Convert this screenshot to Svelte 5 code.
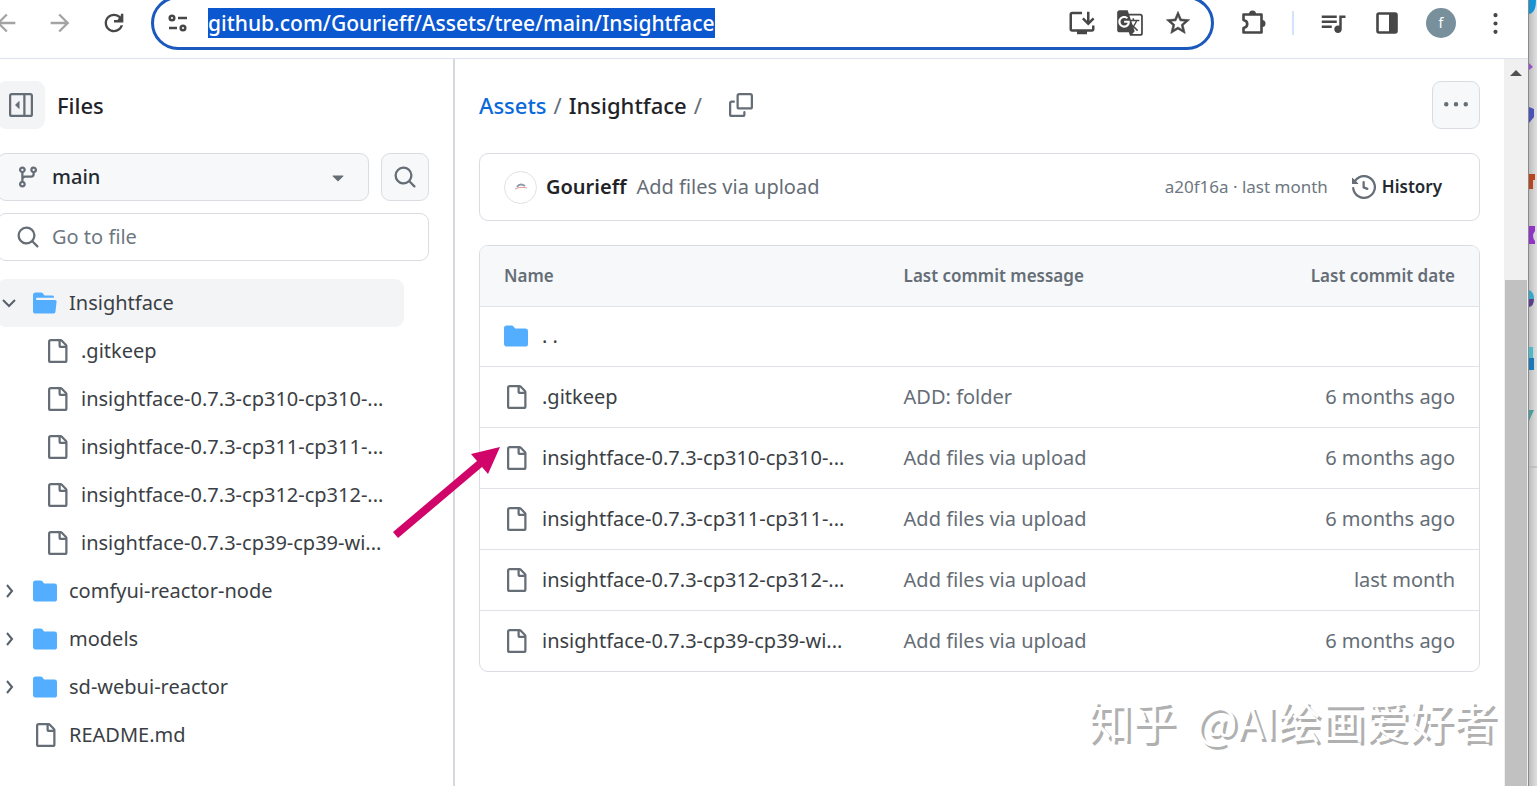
<script lang="ts">
	type Entry = { name: string; message?: string; date?: string };
	type Node = { name: string; kind: 'open' | 'folder' | 'file'; nested?: boolean };

	const tree: Node[] = [
		{ name: 'Insightface', kind: 'open' },
		{ name: '.gitkeep', kind: 'file', nested: true },
		{ name: 'insightface-0.7.3-cp310-cp310-...', kind: 'file', nested: true },
		{ name: 'insightface-0.7.3-cp311-cp311-...', kind: 'file', nested: true },
		{ name: 'insightface-0.7.3-cp312-cp312-...', kind: 'file', nested: true },
		{ name: 'insightface-0.7.3-cp39-cp39-wi...', kind: 'file', nested: true },
		{ name: 'comfyui-reactor-node', kind: 'folder' },
		{ name: 'models', kind: 'folder' },
		{ name: 'sd-webui-reactor', kind: 'folder' },
		{ name: 'README.md', kind: 'file' }
	];

	const entries: Entry[] = [
		{ name: '.gitkeep', message: 'ADD: folder', date: '6 months ago' },
		{ name: 'insightface-0.7.3-cp310-cp310-...', message: 'Add files via upload', date: '6 months ago' },
		{ name: 'insightface-0.7.3-cp311-cp311-...', message: 'Add files via upload', date: '6 months ago' },
		{ name: 'insightface-0.7.3-cp312-cp312-...', message: 'Add files via upload', date: 'last month' },
		{ name: 'insightface-0.7.3-cp39-cp39-wi...', message: 'Add files via upload', date: '6 months ago' }
	];

	let url = $state('github.com/Gourieff/Assets/tree/main/Insightface');
	let query = $state('');
	let branch = $state('main');

	// 16px grid
	const oct = {
		file: 'M2 1.75C2 .784 2.784 0 3.75 0h6.586c.464 0 .909.184 1.237.513l2.914 2.914c.329.328.513.773.513 1.237v9.586A1.75 1.75 0 0 1 13.25 16h-9.5A1.75 1.75 0 0 1 2 14.25Zm1.75-.25a.25.25 0 0 0-.25.25v12.5c0 .138.112.25.25.25h9.5a.25.25 0 0 0 .25-.25V6h-2.75A1.75 1.75 0 0 1 9 4.25V1.5Zm6.75.062V4.25c0 .138.112.25.25.25h2.688l-.011-.013-2.914-2.914-.013-.011Z',
		folder: 'M1.75 1A1.75 1.75 0 0 0 0 2.75v10.5C0 14.216.784 15 1.75 15h12.5A1.75 1.75 0 0 0 16 13.25v-8.5A1.75 1.75 0 0 0 14.25 3H7.5a.25.25 0 0 1-.2-.1l-.9-1.2C6.07 1.26 5.55 1 5 1H1.75Z',
		open: 'M.513 1.513A1.75 1.75 0 0 1 1.75 1h3.5c.55 0 1.07.26 1.4.7l.9 1.2a.25.25 0 0 0 .2.1H13a1 1 0 0 1 1 1v.5H2.75a.75.75 0 0 0 0 1.5h11.978a1 1 0 0 1 .994 1.117L15 13.25A1.75 1.75 0 0 1 13.25 15H1.75A1.75 1.75 0 0 1 0 13.25V2.75c0-.464.184-.91.513-1.237Z',
		search: 'M10.68 11.74a6 6 0 0 1-7.922-8.982 6 6 0 0 1 8.982 7.922l3.04 3.04a.749.749 0 0 1-.326 1.275.749.749 0 0 1-.734-.215ZM11.5 7a4.499 4.499 0 1 0-8.997 0A4.499 4.499 0 0 0 11.5 7Z',
		branch: 'M9.5 3.25a2.25 2.25 0 1 1 3 2.122V6A2.5 2.5 0 0 1 10 8.5H6a1 1 0 0 0-1 1v1.128a2.251 2.251 0 1 1-1.5 0V5.372a2.25 2.25 0 1 1 1.5 0v1.836A2.493 2.493 0 0 1 6 7h4a1 1 0 0 0 1-1v-.628A2.25 2.25 0 0 1 9.5 3.25Zm-6 0a.75.75 0 1 0 1.5 0 .75.75 0 0 0-1.5 0Zm8.25-.75a.75.75 0 1 0 0 1.5.75.75 0 0 0 0-1.5ZM4.25 12a.75.75 0 1 0 0 1.5.75.75 0 0 0 0-1.5Z',
		copy: 'M0 6.75C0 5.784.784 5 1.75 5h1.5a.75.75 0 0 1 0 1.5h-1.5a.25.25 0 0 0-.25.25v7.5c0 .138.112.25.25.25h7.5a.25.25 0 0 0 .25-.25v-1.5a.75.75 0 0 1 1.5 0v1.5A1.75 1.75 0 0 1 9.25 16h-7.5A1.75 1.75 0 0 1 0 14.25ZM5 1.75C5 .784 5.784 0 6.75 0h7.5C15.216 0 16 .784 16 1.75v7.5A1.75 1.75 0 0 1 14.25 11h-7.5A1.75 1.75 0 0 1 5 9.25Zm1.75-.25a.25.25 0 0 0-.25.25v7.5c0 .138.112.25.25.25h7.5a.25.25 0 0 0 .25-.25v-7.5a.25.25 0 0 0-.25-.25Z',
		history: 'm.427 1.927 1.215 1.215a8.002 8.002 0 1 1-1.6 5.685.75.75 0 1 1 1.493-.154 6.5 6.5 0 1 0 1.18-4.458l1.358 1.358A.25.25 0 0 1 3.896 6H.25A.25.25 0 0 1 0 5.75V2.104a.25.25 0 0 1 .427-.177ZM7.75 4a.75.75 0 0 1 .75.75v2.992l2.028.812a.75.75 0 0 1-.557 1.392l-2.5-1A.751.751 0 0 1 7 8.25v-3.5A.75.75 0 0 1 7.75 4Z',
		kebab: 'M8 9a1.5 1.5 0 1 0 0-3 1.5 1.5 0 0 0 0 3ZM1.5 9a1.5 1.5 0 1 0 0-3 1.5 1.5 0 0 0 0 3Zm13 0a1.5 1.5 0 1 0 0-3 1.5 1.5 0 0 0 0 3Z',
		sidebar: 'm4.177 7.823 2.396-2.396A.25.25 0 0 1 7 5.604v4.792a.25.25 0 0 1-.427.177L4.177 8.177a.25.25 0 0 1 0-.354ZM0 1.75C0 .784.784 0 1.75 0h12.5C15.216 0 16 .784 16 1.75v12.5A1.75 1.75 0 0 1 14.25 16H1.75A1.75 1.75 0 0 1 0 14.25Zm1.75-.25a.25.25 0 0 0-.25.25v12.5c0 .138.112.25.25.25H9.5v-13Zm12.5 13a.25.25 0 0 0 .25-.25V1.75a.25.25 0 0 0-.25-.25H11v13Z',
		caret: 'm4.427 7.427 3.396 3.396a.25.25 0 0 0 .354 0l3.396-3.396A.25.25 0 0 0 11.396 7H4.604a.25.25 0 0 0-.177.427Z'
	};

	// 24px grid
	const mat = {
		back: 'M20 11H7.83l5.59-5.59L12 4l-8 8 8 8 1.41-1.41L7.83 13H20v-2z',
		forward: 'M12 4l-1.41 1.41L16.17 11H4v2h12.17l-5.58 5.59L12 20l8-8z',
		reload: 'M17.65 6.35C16.2 4.9 14.21 4 12 4c-4.42 0-7.99 3.58-7.99 8s3.57 8 7.99 8c3.73 0 6.84-2.55 7.73-6h-2.08c-.82 2.33-3.04 4-5.65 4-3.31 0-6-2.69-6-6s2.69-6 6-6c1.66 0 3.14.69 4.22 1.78L15 9.5h-3v2h8V4h-2z',
		install: 'M20 17H4V5h8V3H4c-1.1 0-2 .9-2 2v12c0 1.1.9 2 2 2h4v2h8v-2h4c1.1 0 2-.9 2-2v-3h-2v3zM17 14l5-5-1.41-1.41L18 10.17V3h-2v7.17l-2.59-2.58L12 9z',
		translate: 'M21 4H11l-1-3H3c-1.1 0-2 .9-2 2v15c0 1.1.9 2 2 2h8l1 3h9c1.1 0 2-.9 2-2V6c0-1.1-.9-2-2-2zM7 16c-2.76 0-5-2.24-5-5s2.24-5 5-5c1.35 0 2.48.5 3.35 1.3L9.03 8.57c-.38-.36-1.04-.78-2.03-.78-1.74 0-3.15 1.44-3.15 3.21S5.26 14.21 7 14.21c2.01 0 2.84-1.44 2.92-2.41H7v-1.71h4.68c.07.31.12.61.12 1.02C11.8 13.97 9.89 16 7 16zm6.17-5.42h3.7c-.43 1.25-1.11 2.43-2.05 3.47-.31-.35-.6-.72-.86-1.1l-.79-2.37zm8.33 9.92c0 .55-.45 1-1 1H14l2-2.5-1.04-3.1 3.1 3.1.92-.92-3.3-3.25.02-.02c1.13-1.25 1.93-2.69 2.4-4.22H20v-1.3h-4.53V8h-1.29v1.29h-1.44L11.46 5.5h9.04c.55 0 1 .45 1 1v14z',
		star: 'M22 9.24l-7.19-.62L12 2 9.19 8.63 2 9.24l5.46 4.73L5.82 21 12 17.27 18.18 21l-1.63-7.03L22 9.24zM12 15.4l-3.76 2.27 1-4.28-3.32-2.88 4.38-.38L12 6.1l1.71 4.04 4.38.38-3.32 2.88 1 4.28L12 15.4z',
		music: 'M15 6H3v2h12V6zm0 4H3v2h12v-2zM3 16h8v-2H3v2zM17 6v8.18c-.31-.11-.65-.18-1-.18-1.66 0-3 1.34-3 3s1.34 3 3 3 3-1.34 3-3V8h3V6h-5z',
		more: 'M12 6a2 2 0 1 0 0-4 2 2 0 0 0 0 4zm0 8a2 2 0 1 0 0-4 2 2 0 0 0 0 4zm0 8a2 2 0 1 0 0-4 2 2 0 0 0 0 4z'
	};
</script>

{#snippet icon(d: string, grid = 16, size = 24)}
	<svg width={size} height={size} viewBox="0 0 {grid} {grid}" fill="currentColor" aria-hidden="true">
		<path {d} />
	</svg>
{/snippet}

<div class="screen">
	<div class="window">
		<header class="toolbar">
			<nav class="nav" aria-label="Browser">
				<button class="tool dim" aria-label="Back">{@render icon(mat.back, 24, 28)}</button>
				<button class="tool dim" aria-label="Forward">{@render icon(mat.forward, 24, 28)}</button>
				<button class="tool" aria-label="Reload">{@render icon(mat.reload, 24, 28)}</button>
			</nav>
			<div class="omnibox">
				<button class="chip" aria-label="Site information">
					<svg width="20" height="18" viewBox="0 0 20 18" fill="none" stroke="currentColor" stroke-width="2.5" aria-hidden="true">
						<circle cx="4" cy="4" r="2.3" />
						<path d="M10 4h9M1 14h8" />
						<circle cx="15" cy="14" r="2.3" />
					</svg>
				</button>
				<input class="url" type="text" aria-label="Address" size="48" bind:value={url} />
				<div class="chips">
					<button class="chip" aria-label="Install app">{@render icon(mat.install, 24, 30)}</button>
					<button class="chip" aria-label="Translate page">{@render icon(mat.translate, 24, 28)}</button>
					<button class="chip" aria-label="Bookmark">
						<svg width="28" height="28" viewBox="0 0 24 24" fill="currentColor" stroke="currentColor" stroke-width="0.5" aria-hidden="true">
							<path d={mat.star} />
						</svg>
					</button>
				</div>
			</div>
			<button class="tool" aria-label="Extensions">
				<svg width="28" height="28" viewBox="0 0 28 28" fill="none" stroke="currentColor" stroke-width="2.6" stroke-linejoin="round" aria-hidden="true">
					<path d="M4.500 5.500h18v18h-18v-4.500c5-1 5-7 0-8z" />
					<path d="M10 5a3.500 3.500 0 0 1 7 0zM23 11a3.500 3.500 0 0 1 0 7z" fill="currentColor" stroke="none" />
				</svg>
			</button>
			<span class="divider"></span>
			<button class="tool" aria-label="Media">{@render icon(mat.music, 24, 30)}</button>
			<button class="tool" aria-label="Side panel">
				<svg width="22" height="22" viewBox="0 0 22 22" aria-hidden="true">
					<rect x="1.500" y="1.500" width="19" height="19" rx="1.500" fill="none" stroke="currentColor" stroke-width="2.6" />
					<path d="M13 1h8v20h-8z" fill="currentColor" />
				</svg>
			</button>
			<button class="tool" aria-label="Profile"><span class="profile">f</span></button>
			<button class="tool" aria-label="Menu">{@render icon(mat.more, 24, 25)}</button>
		</header>

		<div class="page">
			<aside class="sidebar">
				<div class="files-head">
					<button class="square quiet" aria-label="Collapse file tree">{@render icon(oct.sidebar)}</button>
					<h2>Files</h2>
				</div>
				<div class="branch-row">
					<label class="branch">
						{@render icon(oct.branch)}
						<select aria-label="Branch" bind:value={branch}>
							<option>main</option>
						</select>
						{@render icon(oct.caret)}
					</label>
					<button class="square" aria-label="Search this repository">{@render icon(oct.search)}</button>
				</div>
				<label class="filter">
					{@render icon(oct.search)}
					<input type="text" aria-label="Go to file" placeholder="Go to file" bind:value={query} />
				</label>
				<ul class="tree">
					{#each tree as node}
						<li class:active={node.kind === 'open'} class:nested={node.nested}>
							<span class="chevron">
								{#if node.kind !== 'file'}
									<svg width="14" height="14" viewBox="0 0 14 14" fill="none" stroke="currentColor" stroke-width="2" aria-hidden="true">
										<path d={node.kind === 'open' ? 'M1 4l6 6 6-6' : 'M5 1l5 6-5 6'} />
									</svg>
								{/if}
							</span>
							<span class="glyph" class:blue={node.kind !== 'file'}>{@render icon(oct[node.kind])}</span>
							<a href="#{node.name}">{node.name}</a>
						</li>
					{/each}
				</ul>
			</aside>

			<main class="content">
				<div class="crumbs">
					<a href="#assets">Assets</a>
					<span class="slash">/</span>
					<h1>Insightface</h1>
					<span class="slash">/</span>
					<button class="copy" aria-label="Copy path">{@render icon(oct.copy)}</button>
					<button class="square more" aria-label="More options">{@render icon(oct.kebab)}</button>
				</div>

				<section class="commit">
					<span class="avatar">
						<svg width="14" height="8" viewBox="0 0 14 8" fill="none" aria-hidden="true">
							<path d="M3 4c2-3 5-3 8-1" stroke="#8a98a8" stroke-width="2" />
							<path d="M1 6c4-2 8-2 12-1" stroke="#e89a98" />
						</svg>
					</span>
					<a class="author" href="#gourieff">Gourieff</a>
					<a class="message" href="#commit">Add files via upload</a>
					<span class="sha">a20f16a · last month</span>
					<a class="history" href="#history">{@render icon(oct.history)}History</a>
				</section>

				<div class="listing">
					<table>
						<thead>
							<tr>
								<th class="col-name">Name</th>
								<th>Last commit message</th>
								<th class="date">Last commit date</th>
							</tr>
						</thead>
						<tbody>
							<tr class="parent">
								<td colspan="3">
									<a class="entry" href="#parent"><span class="glyph blue">{@render icon(oct.folder)}</span>. .</a>
								</td>
							</tr>
							{#each entries as entry}
								<tr>
									<td>
										<a class="entry" href="#{entry.name}"><span class="glyph">{@render icon(oct.file)}</span>{entry.name}</a>
									</td>
									<td>{entry.message}</td>
									<td class="date">{entry.date}</td>
								</tr>
							{/each}
						</tbody>
					</table>
				</div>
			</main>

			<div class="scrollbar">
				<svg width="12" height="6" viewBox="0 0 12 6" aria-hidden="true"><path d="M0 6l6-6 6 6z" fill="#505050" /></svg>
				<div class="thumb"></div>
			</div>
		</div>
	</div>

	<!-- sliver of the desktop dock behind the window -->
	<div class="dock">
		<svg width="8" height="480" viewBox="0 0 8 480" aria-hidden="true">
			<path d="M0 0h7c0 8-2 13-7 14z" fill="#1492d6" />
			<path d="M0 63l4 4-4 3z" fill="#9a4fd0" />
			<path d="M0 107l5 2v8l-5 6z" fill="#4a52b8" />
			<path d="M0 174h6v6H4v9H0z" fill="#b8451f" />
			<path d="M0 226h6v5q-4 5 0 10v3H0z" fill="#9034c8" />
			<path d="M0 290q5 2 5 9H0z" fill="#35a8c8" />
			<path d="M0 299h5q0 7-5 8z" fill="#5b3f8c" />
			<path d="M0 347h4v11H0z" fill="#4fb9c9" />
			<path d="M0 358h5v12H0z" fill="#1b78b8" />
			<path d="M0 410h5l-5 11z" fill="#4d9a9f" />
			<path d="M0 467h8" stroke="#b0b0b0" />
		</svg>
	</div>

	<svg class="pointer" width="108" height="100" viewBox="0 0 108 100" aria-hidden="true">
		<path d="M110 7L98 34l-6-7L8 98l-5-6 84-71-6-7z" fill="#d1046a" />
	</svg>
	<div class="watermark"><span>知乎</span> <span>@AI绘画爱好者</span></div>
</div>

<style>
	:global(body) {
		margin: 0;
	}

	.screen {
		position: relative;
		display: flex;
		min-height: 100vh;
		overflow: hidden;
		font-family: 'Noto Sans', 'Open Sans', 'Noto Sans CJK SC', sans-serif;
		font-size: 20px;
		line-height: 30px;
		color: #3b3f45;
		background: #fff;
	}
	.screen * {
		box-sizing: border-box;
	}

	button,
	input,
	select {
		margin: 0;
		padding: 0;
		border: 0;
		background: none;
		font: inherit;
		color: inherit;
		outline: none;
	}
	button {
		display: flex;
		align-items: center;
		justify-content: center;
		flex: none;
	}
	svg {
		display: block;
		flex: none;
	}
	a {
		color: inherit;
		text-decoration: none;
	}

	.window {
		flex: 1;
		min-width: 0;
		display: flex;
		flex-direction: column;
		border-right: 1px solid #8a8a8a;
	}

	/* browser toolbar */
	.toolbar {
		display: flex;
		align-items: center;
		height: 59px;
		padding: 0 6px 12px 0;
		border-bottom: 1px solid #dde3ee;
		color: #474747;
	}
	.nav {
		display: flex;
		margin: 0 10px 0 -21px;
	}
	.tool {
		width: 54px;
		height: 46px;
	}
	.dim {
		color: #a3a3a3;
	}
	.omnibox {
		flex: 1;
		display: flex;
		align-items: center;
		height: 54px;
		margin-right: 12px;
		padding-right: 9px;
		border: 3px solid #1c59bd;
		border-radius: 27px;
	}
	.chip {
		width: 48px;
		height: 40px;
	}
	.url {
		field-sizing: content;
		height: 30px;
		margin-left: 6px;
		background: #0b57d0;
		color: #fff;
		font-size: 21px;
		font-weight: 500;
	}
	.chips {
		display: flex;
		margin-left: auto;
	}
	.divider {
		width: 2px;
		height: 24px;
		margin: 0 12px;
		background: #d3e3fd;
	}
	.profile {
		width: 30px;
		border-radius: 50%;
		background: #78909c;
		color: #fff;
		font-size: 14px;
	}

	.page {
		flex: 1;
		display: flex;
	}

	/* file tree */
	.sidebar {
		flex: 0 0 458px;
		margin-left: -3px;
		padding: 22px 24px 24px 0;
		border-right: 2px solid #d5d9de;
	}
	.files-head {
		display: flex;
		align-items: center;
		gap: 12px;
	}
	h1,
	h2 {
		margin: 0;
		font-size: 22px;
		font-weight: 500;
		color: #1f2328;
	}
	.square {
		width: 48px;
		height: 48px;
		border: 1px solid #d9dde2;
		border-radius: 9px;
		background: #f6f8fa;
		color: #656d76;
	}
	.square.quiet {
		border-color: #f3f4f6;
		background: #f3f4f6;
	}
	.branch-row {
		display: flex;
		gap: 12px;
		margin-top: 24px;
	}
	.branch,
	.filter {
		display: flex;
		align-items: center;
		height: 48px;
		border: 1px solid #d9dde2;
		border-radius: 9px;
		color: #656d76;
	}
	.branch {
		flex: 1;
		gap: 12px;
		padding: 0 18px;
		background: #f6f8fa;
	}
	.branch select {
		flex: 1;
		appearance: none;
		font-weight: 500;
		color: #24292f;
	}
	.filter {
		gap: 12px;
		margin-top: 12px;
		padding: 0 18px;
	}
	.filter input {
		flex: 1;
	}
	.filter input::placeholder {
		color: #6e7781;
		opacity: 1;
	}
	.tree {
		margin: 18px 25px 0 0;
		padding: 0;
		list-style: none;
	}
	.tree li {
		display: flex;
		align-items: center;
		height: 48px;
		border-radius: 9px;
	}
	.tree li.active {
		background: #f3f4f6;
	}
	.chevron {
		width: 36px;
		padding-left: 5px;
		color: #57606a;
	}
	.nested .chevron {
		width: 48px;
	}
	.glyph {
		margin-right: 12px;
		color: #656d76;
	}
	.glyph.blue {
		color: #54aeff;
	}

	/* directory view */
	.content {
		flex: 1;
		min-width: 0;
		padding: 22px 24px 24px;
	}
	.crumbs {
		display: flex;
		align-items: center;
		gap: 7px;
		font-size: 22px;
	}
	.crumbs a {
		font-weight: 500;
		color: #0969da;
	}
	.slash {
		color: #656d76;
	}
	.copy {
		margin-left: 20px;
		color: #656d76;
	}
	.more {
		margin-left: auto;
	}
	.commit {
		display: flex;
		align-items: center;
		height: 68px;
		margin-top: 24px;
		padding: 0 37px 0 24px;
		border: 1px solid #d9dde2;
		border-radius: 9px;
	}
	.avatar {
		display: flex;
		align-items: center;
		justify-content: center;
		width: 33px;
		height: 33px;
		margin-right: 9px;
		border: 1px solid #dfe2e6;
		border-radius: 50%;
	}
	.author {
		margin-right: 10px;
		font-weight: 600;
		color: #1f2328;
	}
	.message {
		color: #656d76;
	}
	.sha {
		margin-left: auto;
		margin-right: 24px;
		font-size: 17px;
		color: #6e7781;
	}
	.history {
		display: flex;
		align-items: center;
		gap: 6px;
		font-size: 17px;
		font-weight: 600;
		color: #24292f;
	}
	.history :global(svg) {
		color: #656d76;
	}

	.listing {
		margin-top: 24px;
		overflow: hidden;
		border: 1px solid #d9dde2;
		border-radius: 9px;
	}
	table {
		width: 100%;
		table-layout: fixed;
		border-collapse: collapse;
	}
	th,
	td {
		height: 61px;
		padding: 0 24px;
		text-align: left;
		color: #656d76;
	}
	th {
		height: 60px;
		background: #f6f8fa;
		font-size: 17px;
		font-weight: 600;
	}
	.parent td {
		height: 60px;
	}
	.col-name {
		width: 40%;
	}
	tbody tr {
		border-top: 1px solid #dfe2e6;
	}
	.date {
		text-align: right;
	}
	.entry {
		display: flex;
		align-items: center;
		white-space: nowrap;
		color: #3b3f45;
	}
	.entry .glyph {
		margin-right: 14px;
	}

	.scrollbar {
		flex: none;
		display: flex;
		flex-direction: column;
		align-items: center;
		gap: 204px;
		width: 24px;
		padding-top: 11px;
		background: #f0f0f0;
	}
	.thumb {
		flex: 1;
		width: 22px;
		background: #c1c1c1;
	}
	.dock {
		width: 8px;
		background: linear-gradient(90deg, #bdbdbd, #e0e0e0);
	}

	.pointer {
		position: absolute;
		left: 390px;
		top: 440px;
		overflow: visible;
	}
	.watermark {
		position: absolute;
		right: 40px;
		bottom: 36px;
		display: flex;
		gap: 20px;
		font-family: 'Noto Sans CJK SC', sans-serif;
		font-size: 44px;
		line-height: 60px;
		color: #fff;
		text-shadow: 3px 3px 0 #b0b0b0;
	}
</style>
